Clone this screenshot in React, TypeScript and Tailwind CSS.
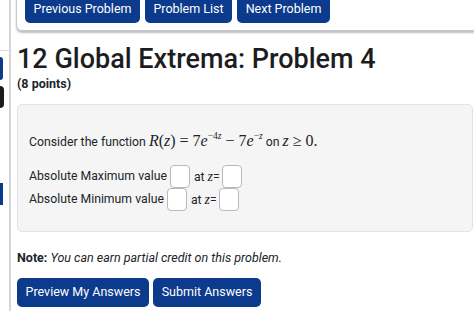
import React from "react";

const NAV: [string, string][] = [
  ["Previous Problem", "w-[115px]"],
  ["Problem List", "w-[87px]"],
  ["Next Problem", "w-[93px]"],
];

const SERIF = { fontFamily: "'Liberation Serif', serif" };

function Blank({ className = "" }: { className?: string }) {
  return (
    <span
      className={`inline-block w-[20px] h-[23px] align-middle rounded-[4px] border border-[#b9b9b9] bg-white ${className}`}
    />
  );
}

function Op({ c }: { c: string }) {
  return <span className="mx-[4px]">{c}</span>;
}

function AnswerRow({ label, h }: { label: string; h: string }) {
  return (
    <div className={`flex items-center ${h}`}>
      <span>{label}</span>
      <Blank className="ml-[3px]" />
      <span className="ml-[4px]">
        at{" "}
        <span className="italic text-[14px]" style={SERIF}>
          z
        </span>
        =
      </span>
      <Blank className="ml-[2px]" />
    </div>
  );
}

export default function App() {
  return (
    <div
      className="flex w-[474px] h-[311px] overflow-hidden bg-white text-[#212529]"
      style={{ fontFamily: "Roboto, 'Liberation Sans', sans-serif" }}
    >
      {/* sidebar sliver */}
      <div className="relative w-[11px] shrink-0 border-r-2 border-[#d6d6d6]">
        <div className="absolute left-0 top-[50px] w-[10px] border-t border-[#dcdcdc]" />
        <div className="absolute left-0 top-[57px] w-[3px] h-[23px] rounded-r-sm bg-[#0c3a8c]" />
        <div className="absolute left-0 top-[86px] w-[4px] h-[22px] rounded-r-sm bg-[#1b1b1b]" />
        <div className="absolute left-0 top-[183px] w-[3px] h-[22px] bg-[#0c3a8c]" />
      </div>

      <div className="flex-1 min-w-0 pl-[5px]">
        {/* nav card */}
        <div className="-mt-[8px] mr-[-4px] rounded-md border border-[#c8c8c8] bg-white pl-[8px] pb-[7px] shadow-[0_2px_2px_rgba(0,0,0,0.25)]">
          <div className="flex gap-[5px]">
            {NAV.map(([n, w]) => (
              <button
                key={n}
                className={`h-[30px] pt-[3px] ${w} rounded-[5px] bg-[#0c3a8c] text-white text-[12.5px]`}
              >
                {n}
              </button>
            ))}
          </div>
        </div>

        <div className="pl-[1px]">
          <h1 className="mt-[13px] text-[27px] leading-[30px] font-medium text-[#1d1d1f]">
            12 Global Extrema: Problem 4
          </h1>
          <div className="mt-[2px] text-[12.5px] font-bold leading-[16px]">(8 points)</div>

          {/* problem box */}
          <div className="mt-[12px] mr-[1px] h-[128px] rounded-[5px] border border-[#e2e2e2] bg-[#f5f5f5] pl-[11px] pt-[26px] text-[12.25px]">
            <div className="leading-[20px]">
              Consider the function{" "}
              <span className="text-[16px]" style={SERIF}>
                <i>R</i>(<i>z</i>)<Op c="=" />7<i>e</i>
                <sup className="text-[9.5px] -top-[7px]">
                  −4<i>z</i>
                </sup>
                <Op c="−" />7<i>e</i>
                <sup className="text-[9.5px] -top-[7px]">
                  −<i>z</i>
                </sup>
              </span>{" "}
              on{" "}
              <span className="text-[16px]" style={SERIF}>
                <i>z</i>
                <Op c="≥" />
                0.
              </span>
            </div>

            <div className="mt-[12px]">
              <AnswerRow label="Absolute Maximum value" h="h-[24px]" />
              <AnswerRow label="Absolute Minimum value" h="h-[23px]" />
            </div>
          </div>

          <div className="mt-[17px] text-[12.5px] leading-[18px]">
            <b className="font-bold">Note:</b> <i>You can earn partial credit on this problem.</i>
          </div>

          <div className="mt-[11px] flex gap-[4px]">
            <button className="h-[29px] w-[132px] rounded-[5px] bg-[#0c3a8c] text-white text-[12.5px]">
              Preview My Answers
            </button>
            <button className="h-[29px] w-[108px] rounded-[5px] bg-[#0c3a8c] text-white text-[12.5px]">
              Submit Answers
            </button>
          </div>
        </div>
      </div>
    </div>
  );
}
